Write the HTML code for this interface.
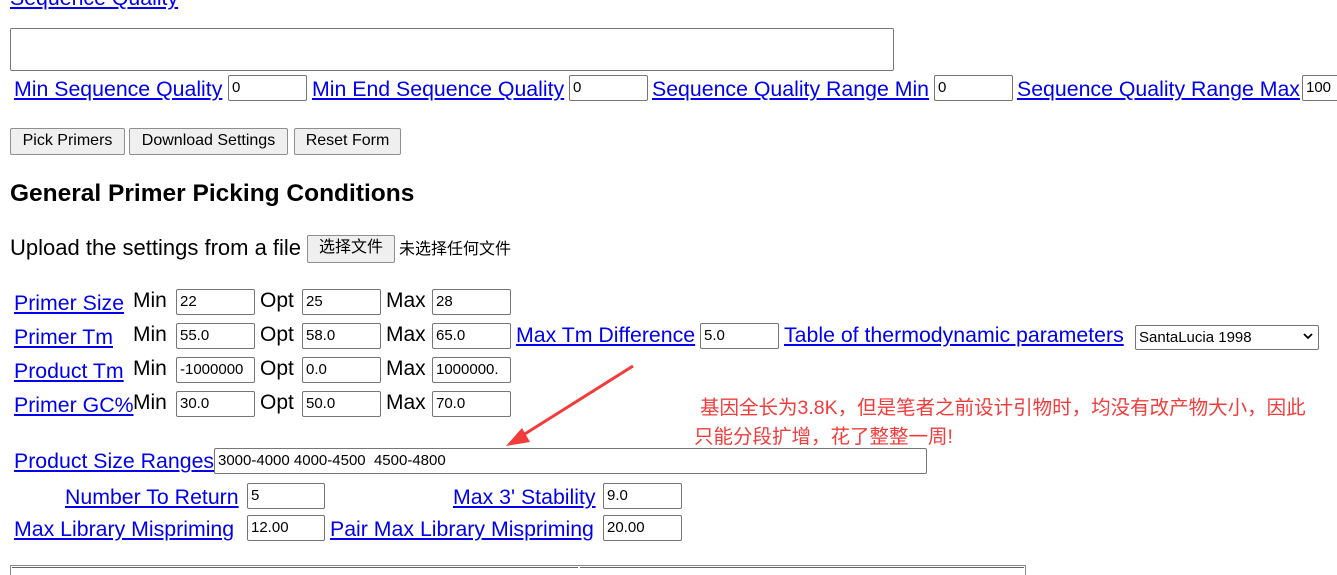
<!DOCTYPE html>
<html><head><meta charset="utf-8"><style>
body{margin:0;width:1337px;height:569px;overflow:hidden;background:#fff;font-family:"Liberation Sans","Noto Sans CJK SC",sans-serif;position:relative}
.a{position:absolute;color:#0000ee;text-decoration:underline;font-size:21.3px;white-space:nowrap;line-height:24px}
.t{position:absolute;color:#000;font-size:21px;white-space:nowrap;line-height:24px}
.i{position:absolute;box-sizing:border-box;border:1px solid #767676;border-radius:2px;background:#fff;font-size:15px;padding:2px 3px;line-height:20px;height:26px;white-space:nowrap;overflow:hidden;color:#000}
.b{position:absolute;box-sizing:border-box;border:1px solid #8f8f8f;border-radius:2px;background:#efefef;font-size:16px;text-align:center;line-height:24px;height:27px;color:#000;white-space:nowrap}
.r{position:absolute;color:#f23c3c;font-size:19.5px;white-space:nowrap;font-family:"Liberation Sans","Noto Sans CJK SC",sans-serif}
</style></head><body>
<div class="a" style="left:10px;top:-14px">Sequence Quality</div>
<div class="i" style="left:10px;top:28px;width:884px;height:43px"></div>

<div class="a" style="left:14px;top:77px">Min Sequence Quality</div>
<div class="i" style="left:228px;top:75px;width:79px">0</div>
<div class="a" style="left:312px;top:77px">Min End Sequence Quality</div>
<div class="i" style="left:569px;top:75px;width:79px">0</div>
<div class="a" style="left:652px;top:77px">Sequence Quality Range Min</div>
<div class="i" style="left:934px;top:75px;width:79px">0</div>
<div class="a" style="left:1017px;top:77px">Sequence Quality Range Max</div>
<div class="i" style="left:1302px;top:75px;width:79px">100</div>

<div class="b" style="left:10px;top:128px;width:115px">Pick Primers</div>
<div class="b" style="left:129px;top:128px;width:159px">Download Settings</div>
<div class="b" style="left:294px;top:128px;width:107px">Reset Form</div>

<div class="t" style="left:10px;top:182px;font-weight:bold;font-size:24.5px">General Primer Picking Conditions</div>
<div class="t" style="left:10px;top:236px;font-size:22px">Upload the settings from a file</div>
<div class="b" style="left:307px;top:235px;width:88px;height:28px;font-size:16px">选择文件</div>
<div class="t" style="left:399px;top:238px;font-size:16px">未选择任何文件</div>

<div class="a" style="left:14px;top:291px">Primer Size</div>
<div class="t" style="left:133px;top:289px">Min</div>
<div class="i" style="left:176px;top:289px;width:79px">22</div>
<div class="t" style="left:260px;top:289px">Opt</div>
<div class="i" style="left:302px;top:289px;width:79px">25</div>
<div class="t" style="left:386px;top:289px">Max</div>
<div class="i" style="left:432px;top:289px;width:79px">28</div>

<div class="a" style="left:14px;top:325px">Primer Tm</div>
<div class="t" style="left:133px;top:323px">Min</div>
<div class="i" style="left:176px;top:323px;width:79px">55.0</div>
<div class="t" style="left:260px;top:323px">Opt</div>
<div class="i" style="left:302px;top:323px;width:79px">58.0</div>
<div class="t" style="left:386px;top:323px">Max</div>
<div class="i" style="left:432px;top:323px;width:79px">65.0</div>
<div class="a" style="left:516px;top:323px">Max Tm Difference</div>
<div class="i" style="left:700px;top:323px;width:79px">5.0</div>
<div class="a" style="left:784px;top:323px">Table of thermodynamic parameters</div>
<div class="i" style="left:1135px;top:325px;width:184px;height:25px;line-height:19px">SantaLucia 1998<svg style="position:absolute;right:5px;top:7px" width="10" height="7"><path d="M1 1 L5 5 L9 1" stroke="#000" stroke-width="1.8" fill="none"/></svg></div>

<div class="a" style="left:14px;top:359px">Product Tm</div>
<div class="t" style="left:133px;top:357px">Min</div>
<div class="i" style="left:176px;top:357px;width:79px">-1000000</div>
<div class="t" style="left:260px;top:357px">Opt</div>
<div class="i" style="left:302px;top:357px;width:79px">0.0</div>
<div class="t" style="left:386px;top:357px">Max</div>
<div class="i" style="left:432px;top:357px;width:79px">1000000.</div>

<div class="a" style="left:14px;top:393px">Primer GC%</div>
<div class="t" style="left:133px;top:391px">Min</div>
<div class="i" style="left:176px;top:391px;width:79px">30.0</div>
<div class="t" style="left:260px;top:391px">Opt</div>
<div class="i" style="left:302px;top:391px;width:79px">50.0</div>
<div class="t" style="left:386px;top:391px">Max</div>
<div class="i" style="left:432px;top:391px;width:79px">70.0</div>

<div class="r" style="left:700px;top:391px">基因全长为3.8K，但是笔者之前设计引物时，均没有改产物大小，因此</div>
<div class="r" style="left:694px;top:420px">只能分段扩增，花了整整一周!</div>
<svg style="position:absolute;left:0;top:0" width="1337" height="569"><line x1="633" y1="366" x2="520" y2="437" stroke="#f23c3c" stroke-width="3"/><polygon points="506,446 522,428 530,442" fill="#f23c3c"/></svg>

<div class="a" style="left:14px;top:449px">Product Size Ranges</div>
<div class="i" style="left:214px;top:448px;width:713px">3000-4000 4000-4500&nbsp; 4500-4800</div>

<div class="a" style="left:65px;top:485px">Number To Return</div>
<div class="i" style="left:247px;top:483px;width:78px">5</div>
<div class="a" style="left:453px;top:485px">Max 3' Stability</div>
<div class="i" style="left:603px;top:483px;width:79px">9.0</div>

<div class="a" style="left:14px;top:517px">Max Library Mispriming</div>
<div class="i" style="left:247px;top:515px;width:78px">12.00</div>
<div class="a" style="left:330px;top:517px">Pair Max Library Mispriming</div>
<div class="i" style="left:603px;top:515px;width:79px">20.00</div>

<div style="position:absolute;left:10px;top:565px;width:1016px;height:1px;background:#888"></div>
<div style="position:absolute;left:12px;top:567px;width:566px;height:1px;background:#666"></div>
<div style="position:absolute;left:580px;top:567px;width:444px;height:1px;background:#666"></div>
<div style="position:absolute;left:10px;top:565px;width:1px;height:10px;background:#888"></div>
<div style="position:absolute;left:1025px;top:565px;width:1px;height:10px;background:#888"></div>
</body></html>
